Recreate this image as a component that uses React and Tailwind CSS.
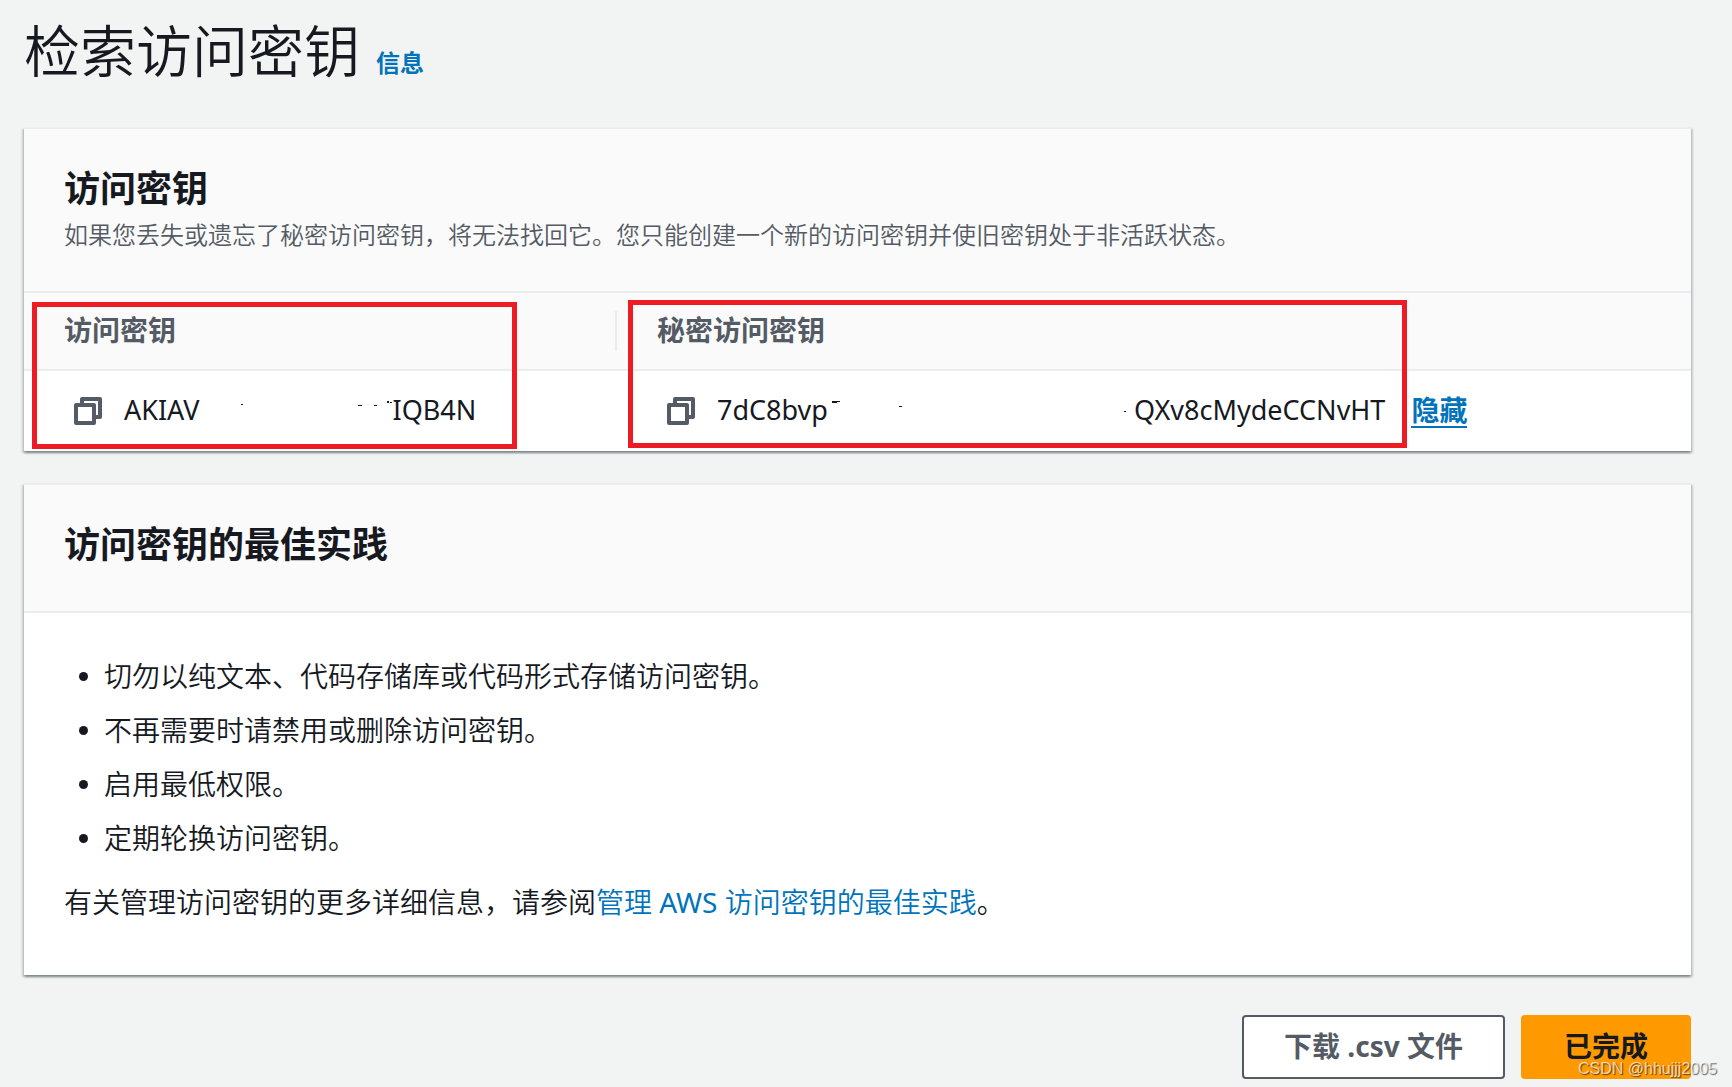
import React from 'react';

const tips = [
    '切勿以纯文本、代码存储库或代码形式存储访问密钥。',
    '不再需要时请禁用或删除访问密钥。',
    '启用最低权限。',
    '定期轮换访问密钥。',
];

const CopyButton = ({ label }) => (
    <button type="button" aria-label={label} className="shrink-0 px-[10px] text-[#545b64]">
        <svg width="28" height="28" viewBox="0 0 28 28" fill="none" stroke="currentColor" strokeWidth="4" strokeLinejoin="round">
            <rect x="2" y="8" width="18" height="18" />
            <path d="M8 6V2H26V20H22" />
        </svg>
    </button>
);

const Panel = ({ children }) => (
    <section className="relative border-t-2 border-[#eaeded] bg-white shadow-[0_2px_2px_0_rgba(0,28,36,0.3),2px_2px_2px_0_rgba(0,28,36,0.15),-2px_2px_2px_0_rgba(0,28,36,0.15)]">
        {children}
    </section>
);

const App = () => {
    return (
        <div className="relative min-h-screen bg-[#f2f3f3] pt-[14px] pr-[41px] pb-2 pl-6 font-['Noto_Sans','Noto_Sans_CJK_SC',sans-serif] text-[28px] leading-[44px] font-[350] text-[#16191f]">
            <header className="flex items-baseline gap-4">
                <h1 className="text-[56px] leading-[72px] font-[350]">检索访问密钥</h1>
                <a href="#info" className="text-2xl font-bold text-[#0073bb]">信息</a>
            </header>

            <main className="mt-[41px] flex flex-col gap-8">
                <Panel>
                    <div className="border-b-2 border-[#eaeded] bg-[#fafafa] px-10 pt-9 pb-[34px]">
                        <h2 className="text-4xl leading-[48px] font-bold">访问密钥</h2>
                        <p className="text-2xl leading-[44px] text-[#545b64]">
                            如果您丢失或遗忘了秘密访问密钥，将无法找回它。您只能创建一个新的访问密钥并使旧密钥处于非活跃状态。
                        </p>
                    </div>
                    <table className="w-full table-fixed border-collapse text-left">
                        <thead>
                            <tr className="h-[77px] border-b-2 border-[#eaeded] bg-[#fafafa] text-[#545b64]">
                                <th scope="col" className="w-[593px] p-0">
                                    <div className="h-10 border-r-2 border-[#eaeded] pl-10 leading-[38px]">访问密钥</div>
                                </th>
                                <th scope="col" className="p-0">
                                    <div className="h-10 pl-10 leading-[38px]">秘密访问密钥</div>
                                </th>
                            </tr>
                        </thead>
                        <tbody>
                            <tr className="h-[81px]">
                                <td className="p-0 pl-10">
                                    <div className="flex items-center text-[27px]">
                                        <CopyButton label="复制访问密钥" />
                                        <span className="pb-[2px] pl-3 font-normal">AKIAV</span>
                                        <svg className="shrink-0" width="193" height="28" viewBox="0 0 193 28" fill="#16191f">
                                            <rect x="41" y="7" width="2" height="1" />
                                            <rect x="158" y="8" width="4" height="1" />
                                            <rect x="174" y="8" width="3" height="1" />
                                            <rect x="187" y="4" width="2" height="2" />
                                            <rect x="190" y="5" width="2" height="1" />
                                        </svg>
                                        <span className="pb-[2px] font-normal">IQB4N</span>
                                    </div>
                                </td>
                                <td className="p-0 pl-10">
                                    <div className="flex items-center text-[27px]">
                                        <CopyButton label="复制秘密访问密钥" />
                                        <span className="pb-[2px] pl-3 font-normal">7dC8bvp</span>
                                        <svg className="shrink-0" width="306" height="28" viewBox="0 0 306 28" fill="#16191f">
                                            <path d="M4 4H12V5H9V6H4Z" />
                                            <rect x="71" y="9" width="3" height="1" />
                                            <rect x="296" y="14" width="2" height="1" />
                                        </svg>
                                        <span className="pb-[2px] font-normal">QXv8cMydeCCNvHT</span>
                                        <a href="#hide" className="ml-[26px] border-b-2 border-[#0073bb] text-[28px] leading-[32px] font-bold text-[#0073bb]">隐藏</a>
                                    </div>
                                </td>
                            </tr>
                        </tbody>
                    </table>
                    {/* highlight frames over the two keys */}
                    <div className="pointer-events-none absolute top-[173px] left-2 h-[147px] w-[485px] border-5 border-[#ed1c24]" />
                    <div className="pointer-events-none absolute top-[171px] left-[604px] h-[148px] w-[779px] border-5 border-[#ed1c24]" />
                </Panel>

                <Panel>
                    <div className="border-b-2 border-[#eaeded] bg-[#fafafa] px-10 pt-9 pb-[42px]">
                        <h2 className="text-4xl leading-[48px] font-bold">访问密钥的最佳实践</h2>
                    </div>
                    <div className="px-10 pt-[41px] pb-[51px]">
                        <ul className="flex flex-col gap-[10px]">
                            {tips.map((tip) => (
                                <li key={tip} className="flex items-center gap-4 pl-[15px]">
                                    <span className="size-[9px] shrink-0 rounded-full bg-[#16191f]" />
                                    {tip}
                                </li>
                            ))}
                        </ul>
                        <p className="mt-5">
                            有关管理访问密钥的更多详细信息，请参阅
                            <a href="#best-practices" className="text-[#0073bb]">管理<span className="font-normal"> AWS </span>访问密钥的最佳实践</a>。
                        </p>
                    </div>
                </Panel>
            </main>

            <footer className="mt-10 flex justify-end gap-4 font-bold">
                <button type="button" className="h-16 rounded-sm border-2 border-[#545b64] bg-white px-10 pb-[2px] text-[#545b64]">
                    下载 .csv 文件
                </button>
                <button type="button" className="h-16 rounded-sm border-2 border-[#ff9900] bg-[#ff9900] px-[41px] pb-[2px]">
                    已完成
                </button>
            </footer>

            <span className="absolute right-[15px] bottom-2 font-['Liberation_Sans',sans-serif] text-base leading-5 font-normal text-white/70 [text-shadow:1px_1px_1px_rgba(0,0,0,0.6)]">
                CSDN @hhujjj2005
            </span>
        </div>
    );
};

export default App;
